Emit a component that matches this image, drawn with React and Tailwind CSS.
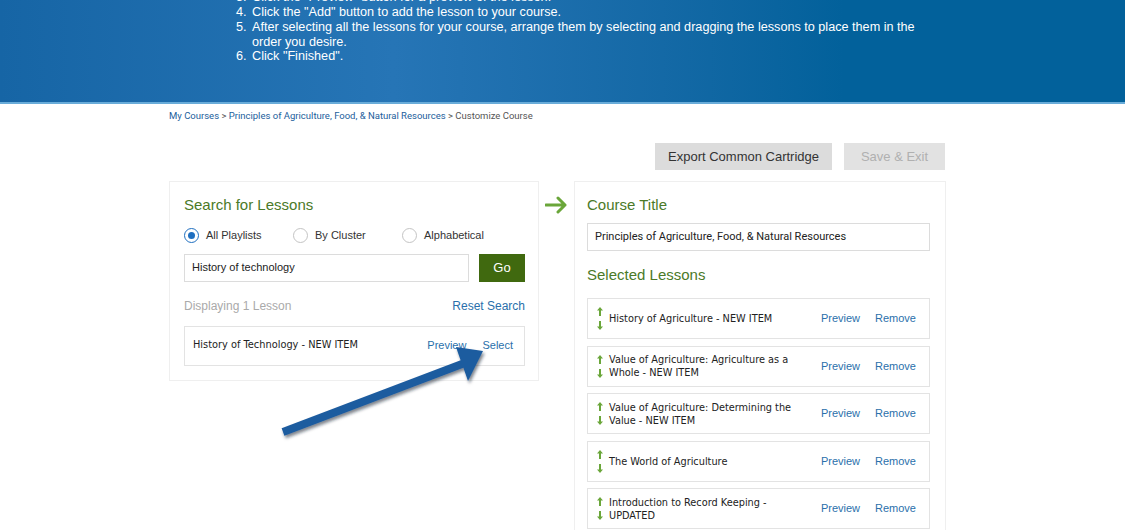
import React from "react";

const steps = [
  { n: "3.", lines: ['Click the "Preview" button for a preview of the lesson.'] },
  { n: "4.", lines: ['Click the "Add" button to add the lesson to your course.'] },
  {
    n: "5.",
    lines: [
      "After selecting all the lessons for your course, arrange them by selecting and dragging the lessons to place them in the",
      "order you desire.",
    ],
  },
  { n: "6.", lines: ['Click "Finished".'] },
];

const lessons = [
  ["History of Agriculture - NEW ITEM"],
  ["Value of Agriculture: Agriculture as a", "Whole - NEW ITEM"],
  ["Value of Agriculture: Determining the", "Value - NEW ITEM"],
  ["The World of Agriculture"],
  ["Introduction to Record Keeping -", "UPDATED"],
];

const Radio = ({ label, checked }) => (
  <label className="flex items-center gap-[7px]">
    <span
      className={
        checked
          ? "flex h-[15px] w-[15px] items-center justify-center rounded-full border-[1.5px] border-[#1f6fc0] bg-white"
          : "h-[15px] w-[15px] rounded-full border border-[#c4c4c4] bg-white"
      }
    >
      {checked && <span className="h-[7px] w-[7px] rounded-full bg-[#1f6fc0]" />}
    </span>
    <span className="text-[11px] text-[#333]">{label}</span>
  </label>
);

const MoveArrows = () => (
  <div className="flex w-[11px] flex-col items-center gap-[5px] text-[#6aa63a]">
    <svg width="6" height="9" viewBox="0 0 6 9">
      <path d="M3 0 L6 3.5 H4 V9 H2 V3.5 H0 Z" fill="currentColor" />
    </svg>
    <svg width="6" height="9" viewBox="0 0 6 9">
      <path d="M3 9 L6 5.5 H4 V0 H2 V5.5 H0 Z" fill="currentColor" />
    </svg>
  </div>
);

export default function App() {
  return (
    <div
      className="relative h-[530px] w-[1125px] overflow-hidden bg-white"
      style={{ fontFamily: '"Liberation Sans", Arial, sans-serif' }}
    >
      {/* instructions banner */}
      <div className="flex h-[104px] flex-col justify-end overflow-hidden border-b-2 border-[#69acd9] bg-linear-to-r from-[#1665a5] via-[#2675b6] via-35% to-[#02619b] to-75% pb-[38px] pl-[236px] text-[12.65px] leading-[14.7px] text-white">
        {steps.map((s) => (
          <div key={s.n} className="flex">
            <span className="w-[16px] shrink-0">{s.n}</span>
            <div>
              {s.lines.map((l) => (
                <div key={l}>{l}</div>
              ))}
            </div>
          </div>
        ))}
      </div>

      <div className="ml-[169px] w-[777px]">
        {/* breadcrumb */}
        <div
          className="pt-[6px] text-[9.5px] leading-[12px]"
          style={{ fontFamily: 'Roboto, "Liberation Sans", sans-serif' }}
        >
          <span className="text-[#22609c]">My Courses</span>
          <span className="text-[#555]"> &gt; </span>
          <span className="text-[#22609c]">Principles of Agriculture, Food, &amp; Natural Resources</span>
          <span className="text-[#555]"> &gt; Customize Course</span>
        </div>

        {/* actions */}
        <div className="mt-[21px] flex justify-end gap-[12px] pr-[1px]">
          <button className="h-[27px] w-[177px] bg-[#dcdcdc] text-[13px] text-[#333]">
            Export Common Cartridge
          </button>
          <button className="h-[27px] w-[101px] bg-[#e2e2e2] text-[13px] text-[#b0b0b0]">
            Save &amp; Exit
          </button>
        </div>

        <div className="mt-[11px] flex items-start">
          {/* search panel */}
          <div className="w-[370px] border border-[#efefef] pb-[14px] pl-[14px] pr-[13px] pt-[13px]">
            <h2 className="text-[15px] leading-[20px] text-[#4b7a28]">Search for Lessons</h2>
            <div className="mt-[12px] flex items-center">
              <div className="w-[109px]">
                <Radio label="All Playlists" checked />
              </div>
              <div className="w-[109px]">
                <Radio label="By Cluster" />
              </div>
              <Radio label="Alphabetical" />
            </div>
            <div className="mt-[10px] flex gap-[10px]">
              <div className="flex h-[28px] flex-1 items-center border border-[#dcdcdc] px-[7px] text-[11px] text-[#222]">
                History of technology
              </div>
              <button className="h-[28px] w-[46px] bg-[#40690f] text-[13px] text-white">Go</button>
            </div>
            <div className="mt-[15px] flex items-center justify-between text-[12px]">
              <span className="text-[#aaa]">Displaying 1 Lesson</span>
              <span className="text-[#2a70ab]">Reset Search</span>
            </div>
            <div className="mt-[11px] flex h-[40px] items-center border border-[#e3e3e3] pl-[8px] pr-[11px]">
              <span
                className="flex-1 text-[9.8px] text-[#222]"
                style={{ fontFamily: '"DejaVu Sans", Verdana, sans-serif' }}
              >
                History of Technology - NEW ITEM
              </span>
              <span className="text-[11px] text-[#2a70ab]">Preview</span>
              <span className="ml-[16px] text-[11px] text-[#2a70ab]">Select</span>
            </div>
          </div>

          {/* green arrow */}
          <div className="flex w-[35px] justify-center pt-[15px]">
            <svg width="24" height="18" viewBox="0 0 24 18">
              <path d="M1 9 H20 M13 2 L20 9 L13 16" stroke="#6aa63a" strokeWidth="3" fill="none" strokeLinecap="round" strokeLinejoin="round" />
            </svg>
          </div>

          {/* course panel */}
          <div className="h-[360px] w-[372px] border border-[#efefef] pl-[12px] pr-[15px] pt-[13px]">
            <h2 className="text-[15px] leading-[20px] text-[#4b7a28]">Course Title</h2>
            <div
              className="mt-[8px] flex h-[28px] items-center border border-[#dcdcdc] px-[7px] text-[11px] text-[#222]"
              style={{ fontFamily: 'Roboto, "Liberation Sans", sans-serif' }}
            >
              Principles of Agriculture, Food, &amp; Natural Resources
            </div>
            <h2 className="mt-[14px] text-[15px] leading-[20px] text-[#4b7a28]">Selected Lessons</h2>
            <div className="mt-[13px] flex flex-col gap-[6.5px]">
              {lessons.map((l) => (
                <div key={l[0]} className="flex h-[41px] items-center border border-[#e3e3e3] pl-[6px] pr-[13px]">
                  <MoveArrows />
                  <div
                    className="ml-[4px] flex-1 text-[9.75px] leading-[13px] text-[#222]"
                    style={{ fontFamily: '"DejaVu Sans", Verdana, sans-serif' }}
                  >
                    {l.map((line) => (
                      <div key={line}>{line}</div>
                    ))}
                  </div>
                  <span className="text-[11px] text-[#2a70ab]">Preview</span>
                  <span className="ml-[15px] text-[11px] text-[#2a70ab]">Remove</span>
                </div>
              ))}
            </div>
          </div>
        </div>
      </div>

      {/* callout arrow over the Select link */}
      <svg className="pointer-events-none absolute left-[270px] top-[330px]" width="230" height="115" viewBox="0 0 230 115">
        <defs>
          <filter id="shade" x="-20%" y="-20%" width="140%" height="160%">
            <feDropShadow dx="1.5" dy="2.5" stdDeviation="1.6" floodColor="#0b1f33" floodOpacity="0.55" />
          </filter>
        </defs>
        <polygon
          points="11.6,98.3 190.6,30.3 186,17 213,21 198,51 193.4,37.7 14.4,105.7"
          fill="#1e5c9f"
          filter="url(#shade)"
        />
      </svg>
    </div>
  );
}
